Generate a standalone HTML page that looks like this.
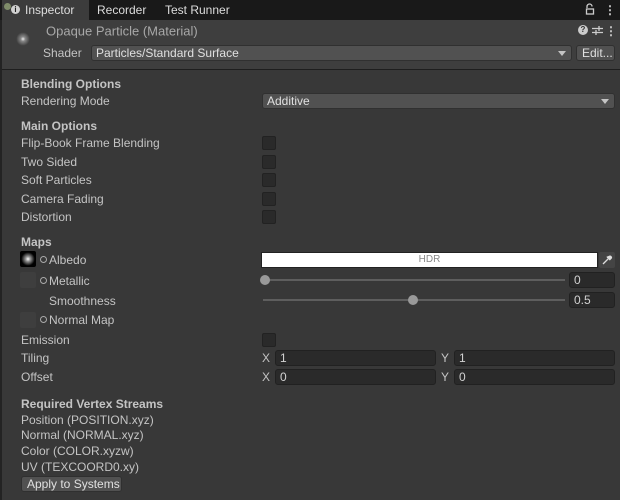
<!DOCTYPE html>
<html><head><style>
*{margin:0;padding:0;box-sizing:border-box}
body{width:620px;height:500px;background:#383838;font-family:"Liberation Sans",sans-serif;font-size:12px;color:#c4c4c4;position:relative;overflow:hidden}
.a{position:absolute;white-space:nowrap}
.t{position:absolute;white-space:nowrap;transform:translateY(-50%)}
.b{font-weight:bold}
.cb{position:absolute;left:262px;width:14px;height:14px;background:#2a2a2a;border:1px solid #222;border-radius:2px}
.fld{position:absolute;background:#2a2a2a;border:1px solid #212121;border-radius:3px;color:#d2d2d2;padding-left:4px;line-height:14px}
.dd{position:absolute;background:#515151;border:1px solid #303030;border-radius:3px;color:#e0e0e0;padding-left:4px;line-height:14px}
.arr{position:absolute;right:5px;top:5px;width:0;height:0;border-left:4px solid transparent;border-right:4px solid transparent;border-top:5px solid #c4c4c4}
.track{position:absolute;height:2px;background:#5e5e5e}
.thumb{position:absolute;width:10px;height:10px;border-radius:50%;background:#999}
.tex{position:absolute;left:20px;width:16px;height:16px;background:#3e3e3e;border-radius:2px}
.dot{position:absolute;left:40px;width:7px;height:7px;border:1px solid #aaa;border-radius:50%}
</style></head><body>
<div class="a" style="left:0;top:0;width:620px;height:20px;background:#191919"></div>
<div class="a" style="left:2px;top:0;width:87px;height:20px;background:#3c3c3c"></div>
<div class="a" style="left:4px;top:3px;width:7px;height:7px;border-radius:50%;background:#7f8c6a"></div>
<div class="a" style="left:11px;top:5px;width:9px;height:9px;border-radius:50%;background:#d0d0d0;color:#222;font-size:8px;font-weight:bold;text-align:center;line-height:9px">i</div>
<div class="t" style="left:25px;top:10px;color:#ddd">Inspector</div>
<div class="t" style="left:97px;top:10px;color:#ddd">Recorder</div>
<div class="t" style="left:165px;top:10px;color:#ddd">Test Runner</div>
<svg class="a" style="left:585px;top:3px" width="10" height="12" viewBox="0 0 10 12"><path d="M2 5V3.5a2.5 2.5 0 0 1 5 0" fill="none" stroke="#ccc" stroke-width="1.3"/><rect x="1.5" y="6" width="7" height="5" fill="none" stroke="#ccc" stroke-width="1.3"/></svg>
<div class="t" style="left:604px;top:10px;color:#ccc;font-weight:bold">&#8942;</div>
<div class="a" style="left:0;top:20px;width:620px;height:49px;background:#3e3e3e"></div>
<div class="a" style="left:0;top:69px;width:620px;height:1px;background:#1e1e1e"></div>
<div class="a" style="left:0;top:20px;width:2px;height:480px;background:#232323"></div>
<div class="a" style="left:15px;top:31px;width:16px;height:16px;border-radius:50%;background:radial-gradient(circle,#eee 0,#888 20%,transparent 60%)"></div>
<div class="t" style="left:46px;top:31px;color:#a8a8a8;font-size:13px">Opaque Particle (Material)</div>
<div class="a" style="left:578px;top:25px;width:10px;height:10px;border-radius:50%;background:#ccc;color:#333;font-size:8px;font-weight:bold;text-align:center;line-height:10px">?</div>
<svg class="a" style="left:592px;top:25px" width="11" height="11" viewBox="0 0 11 11"><path d="M0 3.5H11M0 7.5H11M7 1V6M4 5V10" stroke="#ccc" stroke-width="1.3"/></svg>
<div class="t" style="left:605px;top:31px;color:#ccc;font-weight:bold">&#8942;</div>
<div class="t" style="left:43px;top:53px">Shader</div>
<div class="dd" style="left:91px;top:45px;width:481px;height:16px">Particles/Standard Surface<div class="arr"></div></div>
<div class="dd" style="left:576px;top:45px;width:39px;height:16px;padding-left:5px">Edit...</div>

<div class="t b" style="left:21px;top:84px">Blending Options</div>
<div class="t" style="left:21px;top:101px">Rendering Mode</div>
<div class="dd" style="left:262px;top:93px;width:353px;height:16px">Additive<div class="arr"></div></div>
<div class="t b" style="left:21px;top:126px">Main Options</div>
<div class="t" style="left:21px;top:143px">Flip-Book Frame Blending</div><div class="cb" style="top:136px"></div>
<div class="t" style="left:21px;top:162px">Two Sided</div><div class="cb" style="top:155px"></div>
<div class="t" style="left:21px;top:180px">Soft Particles</div><div class="cb" style="top:173px"></div>
<div class="t" style="left:21px;top:199px">Camera Fading</div><div class="cb" style="top:192px"></div>
<div class="t" style="left:21px;top:217px">Distortion</div><div class="cb" style="top:210px"></div>

<div class="t b" style="left:21px;top:242px">Maps</div>
<div class="tex" style="top:251px;background:radial-gradient(circle,#fff 0,#999 20%,#000 60%)"></div>
<div class="dot" style="top:256px"></div>
<div class="t" style="left:49px;top:260px">Albedo</div>
<div class="a" style="left:261px;top:252px;width:337px;height:16px;background:#fff;border:1px solid #222;color:#888;font-size:10px;text-align:center;line-height:14px">HDR</div>
<div class="a" style="left:599px;top:252px;width:16px;height:16px;background:#444;border-radius:2px"></div>
<svg class="a" style="left:601px;top:254px" width="12" height="12" viewBox="0 0 12 12"><path d="M2 10L7 5" stroke="#ddd" stroke-width="1.3"/><path d="M6 3L9 6M8 2.5a1.2 1.2 0 0 1 2 2L9 5.5 6.5 3Z" stroke="#ddd" fill="#ddd" stroke-width="1.2"/></svg>
<div class="tex" style="top:272px"></div><div class="dot" style="top:277px"></div>
<div class="t" style="left:49px;top:281px">Metallic</div>
<div class="track" style="left:263px;top:279px;width:302px"></div><div class="thumb" style="left:260px;top:275px"></div>
<div class="fld" style="left:569px;top:272px;width:46px;height:16px">0</div>
<div class="t" style="left:49px;top:301px">Smoothness</div>
<div class="track" style="left:263px;top:299px;width:302px"></div><div class="thumb" style="left:408px;top:295px"></div>
<div class="fld" style="left:569px;top:292px;width:46px;height:16px">0.5</div>
<div class="tex" style="top:312px"></div><div class="dot" style="top:316px"></div>
<div class="t" style="left:49px;top:320px">Normal Map</div>
<div class="t" style="left:21px;top:340px">Emission</div><div class="cb" style="top:333px"></div>
<div class="t" style="left:21px;top:358px">Tiling</div>
<div class="t" style="left:262px;top:358px">X</div><div class="fld" style="left:275px;top:350px;width:161px;height:16px">1</div>
<div class="t" style="left:441px;top:358px">Y</div><div class="fld" style="left:454px;top:350px;width:161px;height:16px">1</div>
<div class="t" style="left:21px;top:377px">Offset</div>
<div class="t" style="left:262px;top:377px">X</div><div class="fld" style="left:275px;top:369px;width:161px;height:16px">0</div>
<div class="t" style="left:441px;top:377px">Y</div><div class="fld" style="left:454px;top:369px;width:161px;height:16px">0</div>

<div class="t b" style="left:21px;top:404px">Required Vertex Streams</div>
<div class="t" style="left:21px;top:420px">Position (POSITION.xyz)</div>
<div class="t" style="left:21px;top:435px">Normal (NORMAL.xyz)</div>
<div class="t" style="left:21px;top:451px">Color (COLOR.xyzw)</div>
<div class="t" style="left:21px;top:467px">UV (TEXCOORD0.xy)</div>
<div class="dd" style="left:21px;top:476px;width:101px;height:16px;padding-left:5px">Apply to Systems</div>
</body></html>
